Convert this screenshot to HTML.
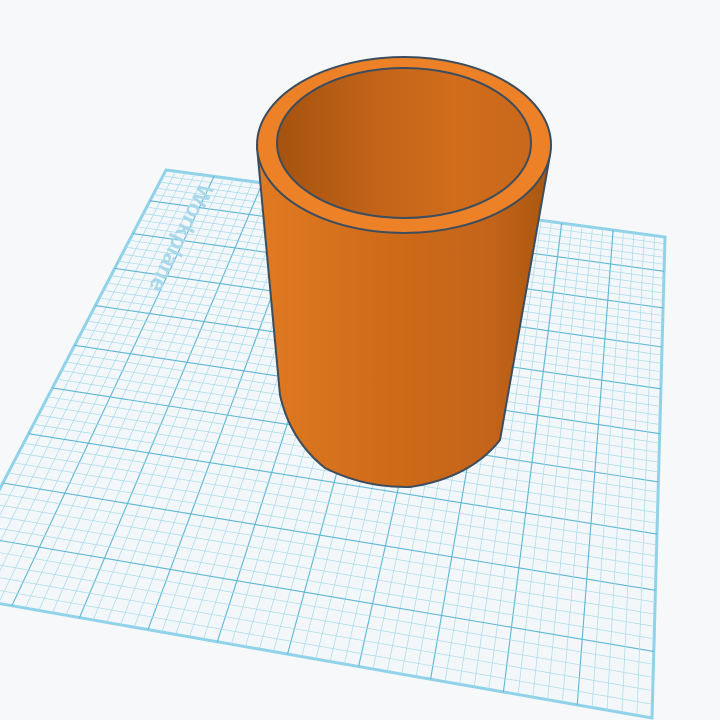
<!DOCTYPE html>
<html><head><meta charset="utf-8"><style>
html,body{margin:0;padding:0;background:#f7f8f9;width:720px;height:720px;overflow:hidden}
svg{display:block}
</style></head><body>
<svg id="s" width="720" height="720" viewBox="0 0 720 720" xmlns="http://www.w3.org/2000/svg">
<defs>
<linearGradient id="body" x1="0" x2="1" y1="0" y2="0">
<stop offset="0" stop-color="#e07a22"/><stop offset="0.45" stop-color="#cf6b18"/><stop offset="0.8" stop-color="#c4641a"/><stop offset="1" stop-color="#a9560f"/>
</linearGradient>
<linearGradient id="inner" x1="0" x2="1" y1="0" y2="0">
<stop offset="0" stop-color="#a5530f"/><stop offset="0.4" stop-color="#c3641a"/><stop offset="0.7" stop-color="#d16d1b"/><stop offset="1" stop-color="#c9681b"/>
</linearGradient>
</defs>
<polygon points="166,170 665,237 652,718 -55,594" fill="#f3f7f9" stroke="#8fd2ea" stroke-width="3"/>
<g id="grid"></g>
<text x="0" y="0" font-family="Liberation Sans, sans-serif" font-size="23" font-weight="bold" fill="#a9d8ea" transform="translate(200,182) rotate(116)">Workplane</text>
<path d="M257,147 L280,395 Q290,440 325,468 Q365,488 410,487 Q470,478 500,440 L550,155 Z" fill="url(#body)" stroke="#3b4d5e" stroke-width="2" stroke-linejoin="round"/>
<ellipse cx="404" cy="145" rx="147" ry="88" fill="#ec8127" stroke="#3b4d5e" stroke-width="2"/>
<ellipse cx="404" cy="143" rx="127" ry="75" fill="url(#inner)" stroke="#3b4d5e" stroke-width="2"/>
</svg>
<script>
(function(){
var P=[[166,170],[665,237],[652,718],[-55,594]];
function H(p){var x0=p[0][0],y0=p[0][1],x1=p[1][0],y1=p[1][1],x2=p[2][0],y2=p[2][1],x3=p[3][0],y3=p[3][1];
var dx1=x1-x2,dx2=x3-x2,dx3=x0-x1+x2-x3,dy1=y1-y2,dy2=y3-y2,dy3=y0-y1+y2-y3;
var d=dx1*dy2-dx2*dy1,g=(dx3*dy2-dx2*dy3)/d,h=(dx1*dy3-dx3*dy1)/d;
var a=x1-x0+g*x1,b=x3-x0+h*x3,c=x0,dd=y1-y0+g*y1,e=y3-y0+h*y3,f=y0;
return function(u,v){var w=g*u+h*v+1;return[(a*u+b*v+c)/w,(dd*u+e*v+f)/w];};}
var T=H(P),g=document.getElementById('grid'),s='',N=50;
for(var i=1;i<N;i++){var t=i/N,maj=i%5==0;
var a=T(t,0),b=T(t,1),c=T(0,t),d=T(1,t);
var st=maj?'stroke="#5db6d6" stroke-width="1.1"':'stroke="#a6dbee" stroke-width="0.7"';
s+='<line x1="'+a[0]+'" y1="'+a[1]+'" x2="'+b[0]+'" y2="'+b[1]+'" '+st+'/>';
s+='<line x1="'+c[0]+'" y1="'+c[1]+'" x2="'+d[0]+'" y2="'+d[1]+'" '+st+'/>';}
g.innerHTML=s;
})();
</script>
</body></html>
